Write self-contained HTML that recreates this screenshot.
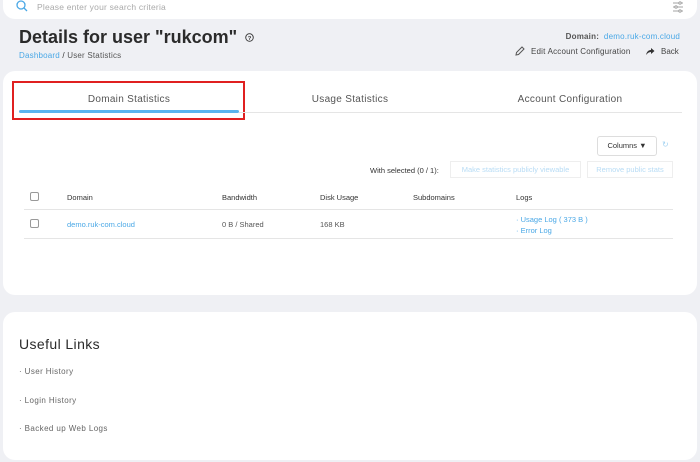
<!DOCTYPE html>
<html><head><meta charset="utf-8"><style>
*{box-sizing:border-box;margin:0;padding:0}
body{width:700px;height:462px;background:#eff0f4;font-family:"Liberation Sans",sans-serif;position:relative;overflow:hidden;color:#333}
.abs{position:absolute}
.card{position:absolute;background:#fff;border-radius:12px}
.blue{color:#4aa8e6}
.f8{font-size:8px}
</style></head><body>
<div class="card" style="left:3px;top:-12px;width:694px;height:31px;border-radius:0 0 12px 12px"></div>
<svg class="abs" style="left:16px;top:0" width="12" height="12" viewBox="0 0 12 12"><circle cx="5" cy="5" r="4" fill="none" stroke="#4aa8e6" stroke-width="1.3"/><line x1="8" y1="8" x2="11" y2="11" stroke="#4aa8e6" stroke-width="1.3"/></svg>
<div class="abs" style="left:37px;top:2px;font-size:8.5px;color:#aaa;letter-spacing:.2px">Please enter your search criteria</div>
<svg class="abs" style="left:672px;top:1px" width="12" height="12" viewBox="0 0 12 12" stroke="#999" fill="none" stroke-width="0.9"><line x1="1" y1="2" x2="11" y2="2"/><line x1="1" y1="6" x2="11" y2="6"/><line x1="1" y1="10" x2="11" y2="10"/><circle cx="8" cy="2" r="1.2" fill="#fff"/><circle cx="4" cy="6" r="1.2" fill="#fff"/><circle cx="8" cy="10" r="1.2" fill="#fff"/></svg>

<div class="abs" style="left:19px;top:27px;font-size:18px;font-weight:bold;color:#2b2b2b">Details for user "rukcom"</div>
<svg class="abs" style="left:245px;top:33px" width="9" height="9" viewBox="0 0 10 10"><circle cx="5" cy="5" r="4.2" fill="none" stroke="#333" stroke-width="1"/><text x="5" y="7.6" font-size="6.5" text-anchor="middle" font-family="Liberation Sans" font-weight="bold" fill="#333">?</text></svg>
<div class="abs f8" style="left:19px;top:51px;letter-spacing:.2px"><span class="blue">Dashboard</span> / <span style="color:#555">User Statistics</span></div>
<div class="abs f8" style="right:20px;top:32px;letter-spacing:.2px"><b style="color:#555">Domain:</b> &nbsp;<span class="blue">demo.ruk-com.cloud</span></div>
<svg class="abs" style="left:515px;top:46px" width="10" height="10" viewBox="0 0 10 10"><path d="M1 9 L1.5 6.5 L7 1 L9 3 L3.5 8.5 Z" fill="none" stroke="#555" stroke-width="1"/></svg>
<div class="abs f8" style="left:531px;top:47px;color:#444;letter-spacing:.2px">Edit Account Configuration</div>
<svg class="abs" style="left:645px;top:46px" width="10" height="10" viewBox="0 0 10 10"><path d="M1 9 C2 5 4 4 6 4 L6 2 L9.5 5 L6 8 L6 6 C4 6 2.5 7 1 9 Z" fill="#333"/></svg>
<div class="abs f8" style="left:661px;top:47px;color:#444">Back</div>

<div class="card" style="left:3px;top:71px;width:694px;height:224px"></div>
<div class="abs" style="left:12px;top:81px;width:233px;height:39px;border:2px solid #e02020"></div>
<div class="abs" style="left:19px;top:94px;width:220px;text-align:center;font-size:10px;color:#555;letter-spacing:.3px">Domain Statistics</div>
<div class="abs" style="left:19px;top:110px;width:220px;height:3px;background:#5ab4ee;border-radius:2px"></div>
<div class="abs" style="left:239px;top:112px;width:443px;height:1px;background:#e5e5e5"></div>
<div class="abs" style="left:250px;top:94px;width:200px;text-align:center;font-size:10px;color:#555;letter-spacing:.3px">Usage Statistics</div>
<div class="abs" style="left:470px;top:94px;width:200px;text-align:center;font-size:10px;color:#555;letter-spacing:.3px">Account Configuration</div>

<div class="abs" style="left:597px;top:136px;width:60px;height:20px;border:1px solid #ddd;border-radius:3px;font-size:7.5px;line-height:18px;text-align:center">Columns &#9660;</div>
<div class="abs blue" style="left:662px;top:140px;font-size:8px;opacity:.5">&#8635;</div>
<div class="abs" style="left:370px;top:166px;font-size:7.5px;color:#333">With selected (0 / 1):</div>
<div class="abs" style="left:450px;top:161px;width:131px;height:17px;border:1px solid #eee;font-size:7.5px;line-height:15px;text-align:center;color:#b8dcf5">Make statistics publicly viewable</div>
<div class="abs" style="left:587px;top:161px;width:86px;height:17px;border:1px solid #eee;font-size:7.5px;line-height:15px;text-align:center;color:#b8dcf5">Remove public stats</div>

<div class="abs" style="left:30px;top:192px;width:9px;height:9px;border:1px solid #999;border-radius:2px"></div>
<div class="abs" style="top:193px;left:0;width:700px;font-size:7.5px;color:#333">
<span class="abs" style="left:67px">Domain</span><span class="abs" style="left:222px">Bandwidth</span><span class="abs" style="left:320px">Disk Usage</span><span class="abs" style="left:413px">Subdomains</span><span class="abs" style="left:516px">Logs</span></div>
<div class="abs" style="left:24px;top:209px;width:649px;height:1px;background:#e5e5e5"></div>
<div class="abs" style="left:30px;top:219px;width:9px;height:9px;border:1px solid #999;border-radius:2px"></div>
<div class="abs" style="top:220px;left:0;width:700px;font-size:7.5px;color:#555">
<span class="abs blue" style="left:67px">demo.ruk-com.cloud</span><span class="abs" style="left:222px">0 B / Shared</span><span class="abs" style="left:320px">168 KB</span></div>
<div class="abs blue" style="left:516px;top:214px;font-size:7.5px;line-height:11px">· Usage Log ( 373 B )<br>· Error Log</div>
<div class="abs" style="left:24px;top:238px;width:649px;height:1px;background:#e5e5e5"></div>

<div class="card" style="left:3px;top:312px;width:694px;height:148px"></div>
<div class="abs" style="left:19px;top:336px;font-size:14px;color:#2b2b2b;letter-spacing:.4px">Useful Links</div>
<div class="abs" style="left:19px;top:367px;font-size:8px;color:#666;letter-spacing:.4px">· User History</div>
<div class="abs" style="left:19px;top:396px;font-size:8px;color:#666;letter-spacing:.4px">· Login History</div>
<div class="abs" style="left:19px;top:424px;font-size:8px;color:#666;letter-spacing:.4px">· Backed up Web Logs</div>
</body></html>
